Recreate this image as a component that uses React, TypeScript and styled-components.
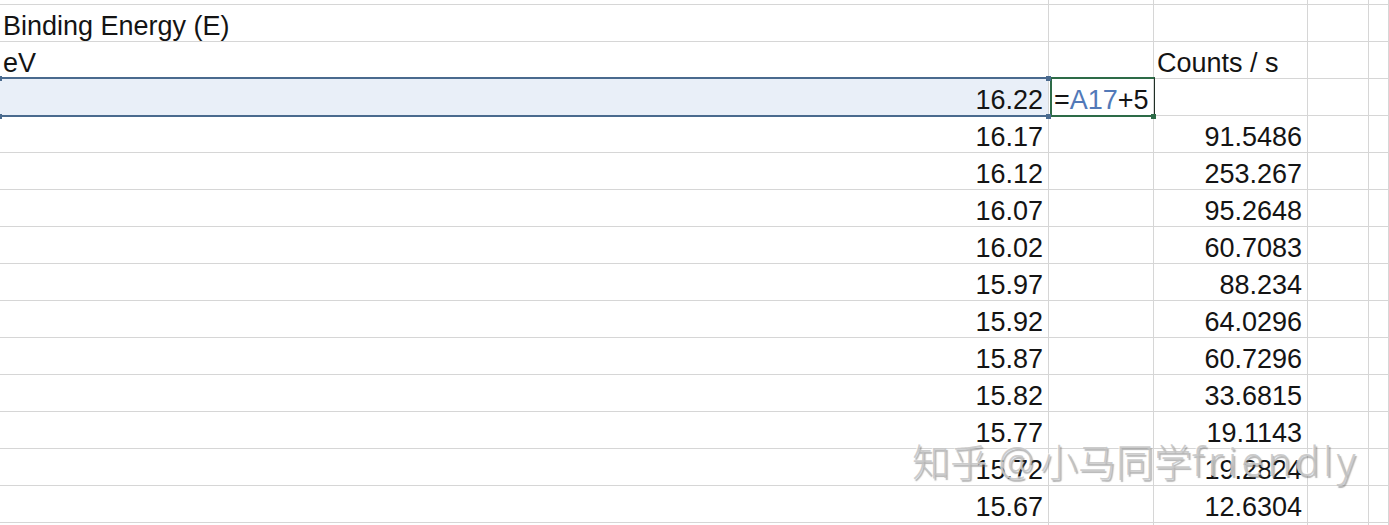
import React from 'react'
import styled, { createGlobalStyle, css } from 'styled-components'

const GlobalStyle = createGlobalStyle`
	html, body {
		margin: 0;
		padding: 0;
		background: #ffffff;
		overflow: hidden;
	}
	body {
		font-family: 'Liberation Sans', Arial, sans-serif;
	}
`

const gridLine = '#d6d6d6'
const selectBlue = '#4a6a8e'
const activeGreen = '#2d6b47'

const Viewport = styled.div`
	position: relative;
	width: 1389px;
	height: 525px;
	overflow: hidden;
`

const Sheet = styled.div`
	display: grid;
	grid-template-columns: 1049px 105px 154px 61px 1fr;
	grid-auto-rows: 37px;
	margin-top: -32px;
`

interface ICellProps {
	$align?: 'left' | 'right'
	$selected?: boolean
	$active?: boolean
}

const Cell = styled.div<ICellProps>`
	position: relative;
	box-sizing: border-box;
	display: flex;
	align-items: flex-end;
	justify-content: ${({ $align }) => ($align === 'right' ? 'flex-end' : 'flex-start')};
	padding: ${({ $align }) => ($align === 'right' ? '0 5px 0 0' : '0 0 0 3px')};
	border-right: 1px solid ${gridLine};
	border-bottom: 1px solid ${gridLine};
	font-size: 27px;
	line-height: 30px;
	color: #141414;
	white-space: nowrap;
	background: ${({ $selected }) => ($selected ? '#e9eff8' : 'transparent')};

	${({ $selected }) =>
		$selected &&
		css`
			&::after {
				content: '';
				position: absolute;
				left: 0;
				right: -1px;
				top: -2px;
				bottom: -2px;
				border-top: 2px solid ${selectBlue};
				border-bottom: 2px solid ${selectBlue};
				pointer-events: none;
			}
		`}

	${({ $active }) =>
		$active &&
		css`
			padding-left: 5px;
			&::after {
				content: '';
				position: absolute;
				left: 1px;
				right: -2px;
				top: -2px;
				bottom: -2px;
				border: 2px solid ${activeGreen};
				border-right: 1px solid #1f2f26;
				pointer-events: none;
				z-index: 2;
			}
		`}
`

const Handle = styled.span<{ $color: string; $x: 'left' | 'right'; $y: 'top' | 'bottom' }>`
	position: absolute;
	width: 5px;
	height: 5px;
	background: ${({ $color }) => $color};
	${({ $x }) => ($x === 'left' ? 'left: -3px;' : 'right: -3px;')}
	${({ $y }) => ($y === 'top' ? 'top: -3px;' : 'bottom: -4px;')}
	z-index: 3;
`

const Ref = styled.span`
	color: #5279b8;
`

const Watermark = styled.div`
	position: absolute;
	left: 912px;
	top: 441px;
	font-family: 'Noto Sans CJK SC', 'Noto Sans', sans-serif;
	font-size: 38px;
	font-weight: 300;
	line-height: 1;
	color: rgba(195, 195, 195, 0.85);
	text-shadow: 1.5px 1.5px 1px rgba(105, 105, 105, 0.5), -1px -1px 0 rgba(255, 255, 255, 0.7);
	white-space: nowrap;
	pointer-events: none;
`

const WatermarkLatin = styled.span<{ $spacing?: number; $gap?: number }>`
	font-family: 'Noto Sans', 'Liberation Sans', sans-serif;
	font-size: 40px;
	font-weight: 300;
	letter-spacing: ${({ $spacing }) => $spacing ?? 0}px;
	margin-right: ${({ $gap }) => $gap ?? 0}px;
`

const data: [string, string][] = [
	['16.17', '91.5486'],
	['16.12', '253.267'],
	['16.07', '95.2648'],
	['16.02', '60.7083'],
	['15.97', '88.234'],
	['15.92', '64.0296'],
	['15.87', '60.7296'],
	['15.82', '33.6815'],
	['15.77', '19.1143'],
	['15.72', '19.2824'],
	['15.67', '12.6304']
]

const EmptyRow = () => (
	<>
		<Cell />
		<Cell />
		<Cell />
		<Cell />
		<Cell />
	</>
)

export default function App() {
	return (
		<Viewport>
			<GlobalStyle />
			<Sheet>
				<EmptyRow />

				<Cell>Binding Energy (E)</Cell>
				<Cell />
				<Cell />
				<Cell />
				<Cell />

				<Cell>eV</Cell>
				<Cell />
				<Cell>Counts / s</Cell>
				<Cell />
				<Cell />

				<Cell $align="right" $selected>
					16.22
					<Handle $color={selectBlue} $x="left" $y="top" />
					<Handle $color={selectBlue} $x="left" $y="bottom" />
				</Cell>
				<Cell $active>
					=<Ref>A17</Ref>+5
					<Handle $color={selectBlue} $x="left" $y="top" />
					<Handle $color={selectBlue} $x="left" $y="bottom" />
					<Handle $color={activeGreen} $x="right" $y="bottom" />
				</Cell>
				<Cell />
				<Cell />
				<Cell />

				{data.map(([energy, counts]) => (
					<React.Fragment key={energy}>
						<Cell $align="right">{energy}</Cell>
						<Cell />
						<Cell $align="right">{counts}</Cell>
						<Cell />
						<Cell />
					</React.Fragment>
				))}

				<EmptyRow />
			</Sheet>
			<Watermark>
				知乎<WatermarkLatin $gap={6}> @</WatermarkLatin>小马同学
				<WatermarkLatin $spacing={4}>friendly</WatermarkLatin>
			</Watermark>
		</Viewport>
	)
}
